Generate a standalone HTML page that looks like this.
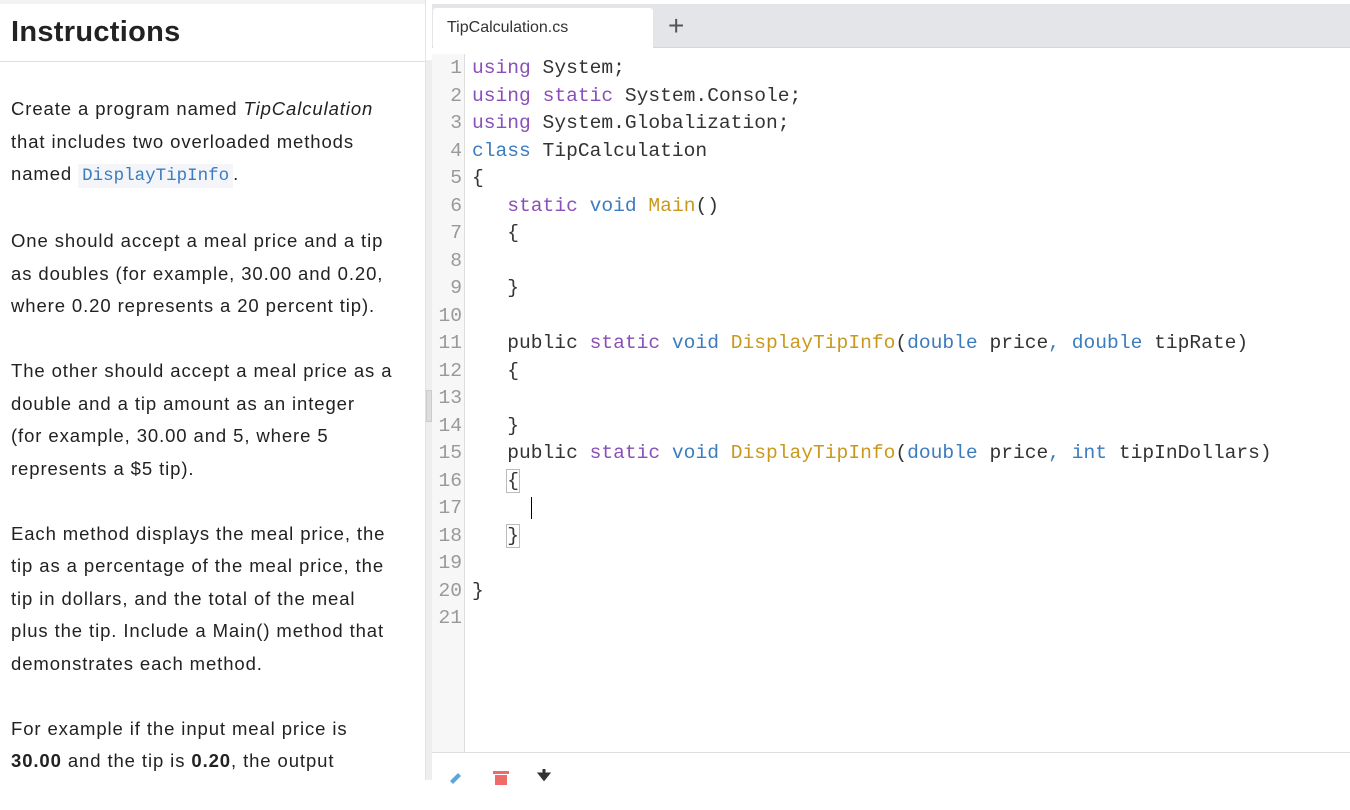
<!DOCTYPE html>
<html><head><style>
body{margin:0;width:1350px;height:780px;overflow:hidden;background:#fff;font-family:"Liberation Sans",sans-serif;position:relative}
#left{position:absolute;left:0;top:0;width:425px;height:780px;border-right:1px solid #e3e3e3}
#hdr{height:62px;border-bottom:1px solid #ddd;border-top:4px solid #f2f2f2;box-sizing:border-box}
#hdr h1{margin:0;font-size:29px;font-weight:bold;color:#222;padding:12px 0 0 11px;line-height:32px;letter-spacing:0.3px}
#txt{position:absolute;left:11px;top:93px;font-size:18.5px;line-height:32.5px;color:#222;width:410px;white-space:nowrap;letter-spacing:0.9px}
#txt p{margin:0 0 32.5px}
code{font-family:"Liberation Mono",monospace;color:#3b7bbf;background:#f3f5f8;padding:2px 4px;font-size:17.5px;letter-spacing:0}
#sb{position:absolute;left:426px;top:60px;width:6px;height:720px;background:#eee}
#sb div{position:absolute;top:330px;left:0;width:6px;height:32px;background:#ddd;border:1px solid #ccc;box-sizing:border-box}
#tabs{position:absolute;left:432px;top:4px;width:918px;height:43px;background:#e3e5e8;border-bottom:1px solid #d6d6d6}
#tab{position:absolute;left:1px;top:4px;width:220px;height:40px;background:#fff;border-radius:3px 3px 0 0;font-size:16px;color:#333;line-height:40px;padding-left:14px;box-sizing:border-box}
#plus{position:absolute;left:236px;top:6px;font-size:28px;color:#555}
#gut{position:absolute;left:432px;top:54px;width:32px;height:698px;background:#f7f7f7;border-right:1px solid #ddd}
#code{position:absolute;left:432px;top:55px;font-family:"Liberation Mono",monospace;font-size:19.6px;line-height:27.5px;white-space:pre;color:#333}
.ln{display:inline-block;width:30px;text-align:right;color:#999;margin-right:10px}
.k{color:#8a4fb8}.b{color:#3b7bbf}.f{color:#c9981d}
.bx{outline:1px solid #bbb}
#bot{position:absolute;left:432px;top:752px;width:918px;height:28px;border-top:1px solid #ddd}
</style></head><body>
<div id="left">
<div id="hdr"><h1>Instructions</h1></div>
<div id="txt">
<p>Create a program named <i>TipCalculation</i><br>that includes two overloaded methods<br>named <code>DisplayTipInfo</code>.</p>
<p>One should accept a meal price and a tip<br>as doubles (for example, 30.00 and 0.20,<br>where 0.20 represents a 20 percent tip).</p>
<p>The other should accept a meal price as a<br>double and a tip amount as an integer<br>(for example, 30.00 and 5, where 5<br>represents a $5 tip).</p>
<p>Each method displays the meal price, the<br>tip as a percentage of the meal price, the<br>tip in dollars, and the total of the meal<br>plus the tip. Include a Main() method that<br>demonstrates each method.</p>
<p>For example if the input meal price is<br><b>30.00</b> and the tip is <b>0.20</b>, the output</p>
</div>
</div>
<div id="sb"><div></div></div>
<div id="tabs"><div id="tab">TipCalculation.cs</div><div id="plus">+</div></div>
<div id="gut"></div>
<div id="code"><span class="ln">1</span><span class="k">using</span> System;
<span class="ln">2</span><span class="k">using</span> <span class="k">static</span> System.Console;
<span class="ln">3</span><span class="k">using</span> System.Globalization;
<span class="ln">4</span><span class="b">class</span> TipCalculation
<span class="ln">5</span>{
<span class="ln">6</span>   <span class="k">static</span> <span class="b">void</span> <span class="f">Main</span>()
<span class="ln">7</span>   {
<span class="ln">8</span>
<span class="ln">9</span>   }
<span class="ln">10</span>
<span class="ln">11</span>   public <span class="k">static</span> <span class="b">void</span> <span class="f">DisplayTipInfo</span>(<span class="b">double</span> price<span class="b">,</span> <span class="b">double</span> tipRate)
<span class="ln">12</span>   {
<span class="ln">13</span>
<span class="ln">14</span>   }
<span class="ln">15</span>   public <span class="k">static</span> <span class="b">void</span> <span class="f">DisplayTipInfo</span>(<span class="b">double</span> price<span class="b">,</span> <span class="b">int</span> tipInDollars)
<span class="ln">16</span>   <span class="bx">{</span>
<span class="ln">17</span>     <span style="border-left:1px solid #000"></span>
<span class="ln">18</span>   <span class="bx">}</span>
<span class="ln">19</span>
<span class="ln">20</span>}
<span class="ln">21</span></div>
<div id="bot">
<svg width="140" height="28" style="position:absolute;left:14px;top:12px">
<path d="M4 16 L12 8 L15 11 L7 19 Z" fill="#5aa7dc"/>
<rect x="47" y="6" width="16" height="3" fill="#f06a6a"/><rect x="49" y="10" width="12" height="10" fill="#f06a6a"/>
<path d="M98 4 v8 M94 9 l4 5 l4 -5 z" stroke="#333" stroke-width="3" fill="#333"/>
</svg>
</div>
</body></html>
